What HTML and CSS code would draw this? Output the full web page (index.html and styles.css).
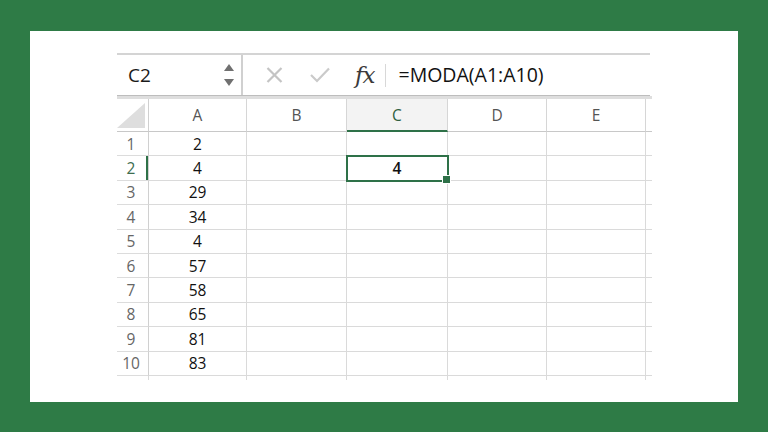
FILE: index.html
```html
<!DOCTYPE html>
<html>
<head>
<meta charset="utf-8">
<link rel="stylesheet" href="styles.css">
</head>
<body>
<div class="frame">
  <div class="sheet">
    <div class="fbar">
      <div class="namebox">
        <span class="ref">C2</span>
        <span class="spin">
          <svg width="10" height="24" viewBox="0 0 10 24"><polygon points="5,1 10,8 0,8" fill="#707070"/><polygon points="0,16 10,16 5,23" fill="#707070"/></svg>
        </span>
      </div>
      <span class="btn-x">
        <svg width="17" height="16" viewBox="0 0 17 16"><path d="M1.5 1 L15.5 15 M15.5 1 L1.5 15" stroke="#c4c4c4" stroke-width="2.2" fill="none"/></svg>
      </span>
      <span class="btn-ok">
        <svg width="20" height="16" viewBox="0 0 20 16"><path d="M1 8 L7 14 L19 1.5" stroke="#cacaca" stroke-width="2.2" fill="none"/></svg>
      </span>
      <span class="fx">fx</span>
      <span class="fsep"></span>
      <span class="formula">=MODA(A1:A10)</span>
    </div>
    <div class="grid">
      <div class="corner"><svg width="28" height="25" viewBox="0 0 28 25"><polygon points="0,25 28,25 28,0" fill="#dedede"/></svg></div>
      <div class="ch">A</div>
      <div class="ch">B</div>
      <div class="ch sel">C</div>
      <div class="ch">D</div>
      <div class="ch">E</div>
      <div class="ch tail"></div>

      <div class="rh">1</div><div class="c">2</div><div class="c"></div><div class="c"></div><div class="c"></div><div class="c"></div><div class="c tail"></div>
      <div class="rh selrow">2</div><div class="c">4</div><div class="c"></div><div class="c active">4<span class="handle"></span></div><div class="c"></div><div class="c"></div><div class="c tail"></div>
      <div class="rh">3</div><div class="c">29</div><div class="c"></div><div class="c"></div><div class="c"></div><div class="c"></div><div class="c tail"></div>
      <div class="rh">4</div><div class="c">34</div><div class="c"></div><div class="c"></div><div class="c"></div><div class="c"></div><div class="c tail"></div>
      <div class="rh">5</div><div class="c">4</div><div class="c"></div><div class="c"></div><div class="c"></div><div class="c"></div><div class="c tail"></div>
      <div class="rh">6</div><div class="c">57</div><div class="c"></div><div class="c"></div><div class="c"></div><div class="c"></div><div class="c tail"></div>
      <div class="rh">7</div><div class="c">58</div><div class="c"></div><div class="c"></div><div class="c"></div><div class="c"></div><div class="c tail"></div>
      <div class="rh">8</div><div class="c">65</div><div class="c"></div><div class="c"></div><div class="c"></div><div class="c"></div><div class="c tail"></div>
      <div class="rh">9</div><div class="c">81</div><div class="c"></div><div class="c"></div><div class="c"></div><div class="c"></div><div class="c tail"></div>
      <div class="rh">10</div><div class="c">83</div><div class="c"></div><div class="c"></div><div class="c"></div><div class="c"></div><div class="c tail"></div>

      <div class="stub"></div><div class="stub"></div><div class="stub"></div><div class="stub"></div><div class="stub"></div><div class="stub"></div><div class="stub tail"></div>
    </div>
  </div>
</div>
</body>
</html>
```

FILE: styles.css
```css
html, body {
  margin: 0;
  padding: 0;
}
body {
  width: 768px;
  height: 432px;
  background: #2e7b46;
  padding: 31px 30px 30px 30px;
  box-sizing: border-box;
  font-family: "Open Sans", "Liberation Sans", sans-serif;
}
.frame {
  background: #ffffff;
  width: 708px;
  height: 371px;
  box-sizing: border-box;
  padding: 22px 0 0 87px;
}
.sheet {
  display: flex;
  flex-direction: column;
  width: 535px;
}
.fbar {
  display: flex;
  align-items: center;
  width: 533px;
  height: 40px;
  border-top: 2px solid #d4d4d4;
  border-bottom: 1px solid #bdbdbd;
}
.namebox {
  display: flex;
  align-items: center;
  justify-content: space-between;
  width: 126px;
  height: 100%;
  box-sizing: border-box;
  padding: 0 7px 0 11px;
  border-right: 2px solid #d0d0d0;
}
.ref {
  font-size: 19px;
  font-weight: 500;
  color: #1a1a1a;
  line-height: 1;
}
.spin {
  display: flex;
}
.btn-x {
  display: flex;
  margin-left: 23px;
}
.btn-ok {
  display: flex;
  margin-left: 27px;
}
.fx {
  margin-left: 25px;
  font-family: "DejaVu Serif", "Liberation Serif", serif;
  font-style: italic;
  font-size: 23px;
  color: #3a3a3a;
  line-height: 1;
  letter-spacing: -1px;
}
.fsep {
  width: 1px;
  height: 23px;
  background: #d8d8d8;
  margin-left: 11px;
}
.formula {
  margin-left: 12px;
  font-size: 19.5px;
  font-weight: 500;
  color: #111;
  line-height: 1;
}
.grid {
  display: grid;
  grid-template-columns: 32px 98px 100px 101px 99px 99px 6px;
  grid-template-rows: 33px repeat(10, 24.4px) 4px;
  border-top: 3px solid #dedede;
}
.corner {
  border-right: 1px solid #d0d0d0;
  border-bottom: 1px solid #c8c8c8;
  display: flex;
  align-items: flex-end;
  justify-content: flex-end;
  padding: 0 3px 3px 0;
}
.ch {
  display: flex;
  align-items: center;
  justify-content: center;
  font-size: 15.5px;
  color: #555;
  border-right: 1px solid #d6d6d6;
  border-bottom: 1px solid #c8c8c8;
}
.ch.sel {
  background: #f3f3f3;
  color: #2e5e40;
  border-bottom: 2px solid #2e7148;
}
.ch.tail, .c.tail, .stub.tail {
  border-right: none;
}
.rh {
  display: flex;
  align-items: center;
  justify-content: center;
  font-size: 15.5px;
  color: #666;
  border-right: 1px solid #d0d0d0;
  border-bottom: 1px solid #dcdcdc;
  padding-right: 3px;
}
.rh.selrow {
  color: #3e6e50;
  box-shadow: inset -2px 0 0 #2e7148;
}
.c {
  display: flex;
  align-items: center;
  justify-content: center;
  font-size: 15.5px;
  font-weight: 500;
  color: #111;
  border-right: 1px solid #dadada;
  border-bottom: 1px solid #dadada;
  position: relative;
}
.c.active {
  outline: 2.5px solid #2e7148;
  outline-offset: -1px;
  font-weight: 600;
  z-index: 1;
}
.handle {
  position: absolute;
  right: -4px;
  bottom: -4px;
  width: 7px;
  height: 7px;
  background: #2e7148;
  border: 1px solid #ffffff;
}
.stub {
  border-right: 1px solid #dadada;
}
```
